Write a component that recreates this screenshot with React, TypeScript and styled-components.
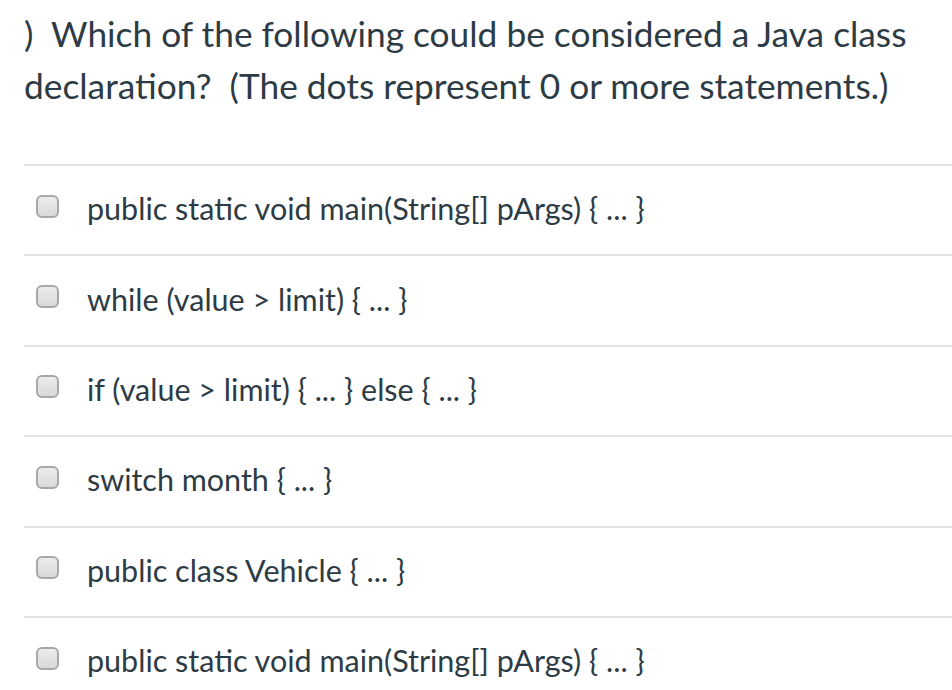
import React from 'react'
import styled, { createGlobalStyle } from 'styled-components'

const GlobalStyle = createGlobalStyle`
  html, body {
    margin: 0;
    padding: 0;
    background: #ffffff;
  }
  body {
    font-family: Lato, "Noto Sans", sans-serif;
    color: #2d3b45;
    overflow: hidden;
  }
`

const Page = styled.div`
  width: 952px;
  height: 690px;
  padding-left: 24px;
  box-sizing: border-box;
  overflow: hidden;
`

const Question = styled.div`
  font-size: 35.3px;
  line-height: 52px;
  padding-top: 8px;
  margin-bottom: 52px;
  white-space: nowrap;
`

const Answers = styled.div`
  display: flex;
  flex-direction: column;
`

const Answer = styled.label`
  display: flex;
  align-items: center;
  height: 90.4px;
  border-top: 2px solid #e2e2e2;
  box-sizing: border-box;
  cursor: pointer;
`

const Box = styled.span`
  width: 23px;
  height: 23px;
  margin-left: 12px;
  margin-right: 28px;
  margin-bottom: 8px;
  box-sizing: border-box;
  border: 2px solid #a8a8a8;
  border-radius: 6px;
  background: linear-gradient(#ececec, #d9d9d9);
  flex-shrink: 0;
`

const AnswerText = styled.span`
  font-size: 30.5px;
  margin-bottom: 4px;
  white-space: nowrap;
`

const answers = [
  'public static void main(String[] pArgs) { ... }',
  'while (value > limit) { ... }',
  'if (value > limit) { ... } else { ... }',
  'switch month { ... }',
  'public class Vehicle { ... }',
  'public static void main(String[] pArgs) { ... }',
]

export default function App() {
  return (
    <Page>
      <GlobalStyle />
      <Question>
        ) &nbsp;Which of the following could be considered a Java class
        <br />
        declaration?&nbsp; (The dots represent 0 or more statements.)
      </Question>
      <Answers>
        {answers.map((a, i) => (
          <Answer key={i}>
            <Box />
            <AnswerText>{a}</AnswerText>
          </Answer>
        ))}
      </Answers>
    </Page>
  )
}
